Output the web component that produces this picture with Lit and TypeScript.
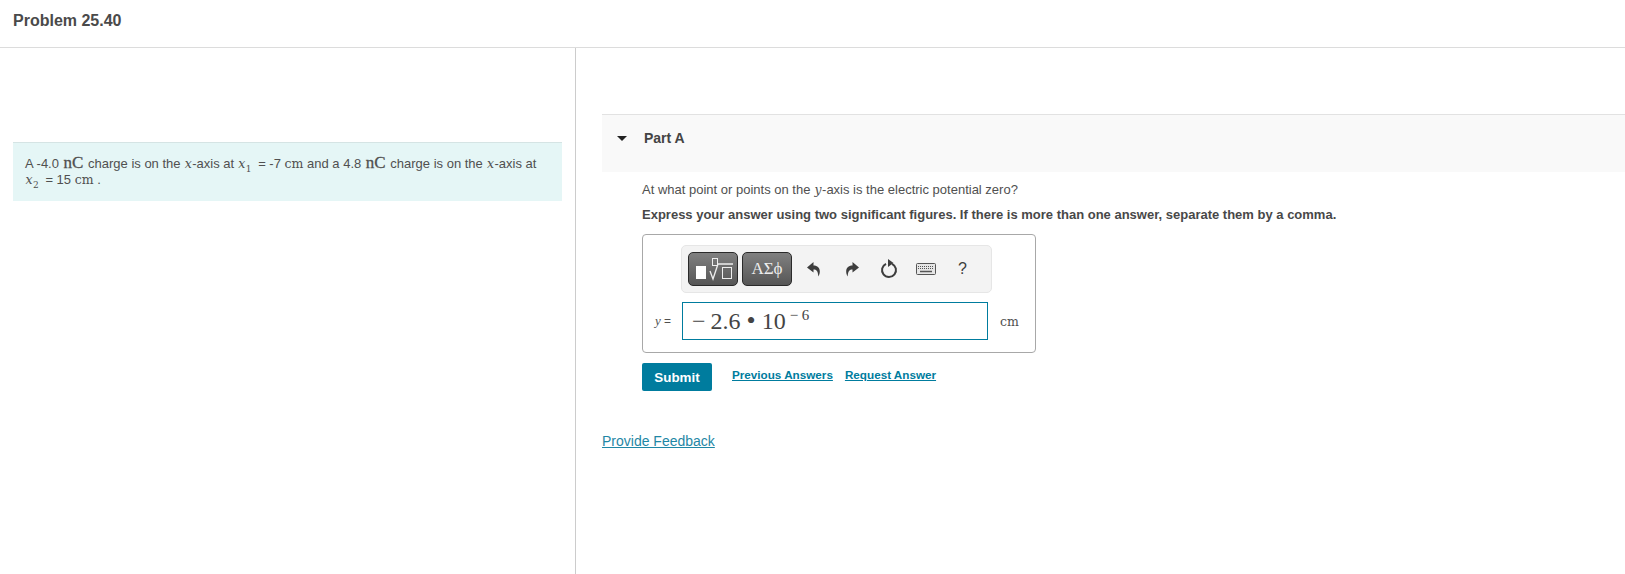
import { LitElement, html, css } from 'lit';
import { customElement } from 'lit/decorators.js';

@customElement('app-root')
export class AppRoot extends LitElement {
  static styles = css`
    :host {
      display: block;
      height: 574px;
      overflow: hidden;
      background: #fff;
      color: #505050;
      font-family: 'Liberation Sans', Arial, sans-serif;
      font-size: 13px;
    }

    .title {
      height: 48px;
      box-sizing: border-box;
      padding: 13px 0 0 13px;
      border-bottom: 1px solid #dcdcdc;
      font-size: 16px;
      line-height: 16px;
      font-weight: bold;
      color: #4a4a4a;
    }

    .columns {
      display: flex;
      height: 526px;
    }

    .left {
      width: 576px;
      box-sizing: border-box;
      flex: none;
      padding: 94px 13px 0 13px;
      border-right: 1px solid #ccc;
    }

    .intro {
      height: 59px;
      box-sizing: border-box;
      padding: 12px 12px 0 12px;
      background: #e5f6f6;
      border-top: 1px solid #d5e4e4;
      line-height: 16px;
    }

    .m {
      font-family: 'DejaVu Serif', serif;
      font-size: 12.5px;
    }
    .m.big {
      margin: 0 1px;
      font-family: 'Liberation Serif', serif;
      font-size: 17px;
      -webkit-text-stroke: 0.3px #505050;
    }
    .m i { padding: 0 0.5px; }
    .m sub { margin-right: 3px; font-size: 9px; line-height: 0; }
    .nb { white-space: nowrap; }

    .right {
      flex: 1;
      min-width: 0;
      padding: 66px 0 0 26px;
    }

    .part-head {
      display: flex;
      align-items: flex-start;
      height: 58px;
      box-sizing: border-box;
      border-top: 1px solid #e2e2e2;
      background: #f9f9f9;
      padding: 15px 0 0 15px;
      font-size: 14px;
      line-height: 16px;
      font-weight: bold;
      color: #444;
    }
    .part-head svg { margin: 6px 17px 0 0; }

    .part-body { padding: 0 0 0 40px; }

    .q { margin: 10px 0 0; line-height: 16px; }
    .hint { margin: 9px 0 0; line-height: 16px; font-weight: bold; color: #484848; }

    .answer {
      width: 394px;
      height: 119px;
      box-sizing: border-box;
      margin-top: 11px;
      padding: 10px 0 0 38px;
      border: 1px solid #a8a8a8;
      border-radius: 4px;
    }

    .toolbar {
      display: flex;
      align-items: center;
      width: 311px;
      height: 48px;
      box-sizing: border-box;
      padding: 0 0 0 6px;
      background: #f3f3f3;
      border: 1px solid #e6e6e6;
      border-radius: 5px;
    }

    .tmpl {
      display: flex;
      align-items: center;
      justify-content: center;
      width: 50px;
      height: 34px;
      box-sizing: border-box;
      background: linear-gradient(#808080, #565656);
      border: 1px solid #2a2a2a;
      border-radius: 5px;
      color: #eee;
    }
    .tmpl.a { width: 50px; margin-right: 4px; }
    .tmpl.b {
      font-family: 'Liberation Serif', serif;
      font-size: 17px;
    }

    .tool {
      display: flex;
      align-items: center;
      justify-content: center;
      width: 37px;
      height: 34px;
      color: #3d3d3d;
    }
    .tool.first { width: 39px; margin-left: 2px; }
    .tool.help { font-size: 16px; }

    .entry {
      display: flex;
      align-items: center;
      margin: 9px 0 0 -26px;
    }
    .entry .lhs {
      width: 27px;
      flex: none;
      font-size: 12px;
      white-space: nowrap;
    }
    .entry .lhs i { font-family: 'Liberation Serif', serif; font-size: 13px; }

    .field {
      display: flex;
      align-items: center;
      width: 306px;
      height: 38px;
      box-sizing: border-box;
      padding: 0 0 0 9px;
      border: 1px solid #007c9e;
      font-family: 'Liberation Serif', serif;
      font-size: 24px;
      color: #444;
      white-space: nowrap;
    }
    .field .dot { margin: 0 6px; font-size: 26px; line-height: 24px; }
    .field .minus { margin-right: 5px; }
    .field sup {
      align-self: flex-start;
      margin: 4px 0 0 4px;
      font-size: 15px;
      line-height: 16px;
    }

    .unit {
      margin-left: 12px;
      font-family: 'DejaVu Serif', serif;
      font-size: 12.5px;
    }

    .actions {
      display: flex;
      align-items: flex-start;
      margin-top: 10px;
    }
    .submit {
      width: 70px;
      height: 28px;
      padding: 0;
      border: 0;
      border-radius: 2px;
      background: #007c9e;
      color: #fff;
      font: bold 13.4px 'Liberation Sans', Arial, sans-serif;
    }
    .actions a {
      margin: 4px 0 0 12px;
      color: #007c9e;
      font-size: 11.7px;
      font-weight: bold;
      line-height: 16px;
      text-decoration: underline;
    }
    .actions a.prev { margin-left: 20px; }

    .feedback {
      display: block;
      margin-top: 42px;
      color: #1f87a5;
      font-size: 14px;
      line-height: 16px;
      text-decoration: underline;
    }
  `;

  render() {
    return html`
      <div class="title">Problem 25.40</div>
      <div class="columns">
        <div class="left">
          <div class="intro">
            A -4.0 <span class="m big">nC</span> charge is on the <span class="m"><i>x</i></span>-axis at
            <span class="m"><i>x</i><sub>1</sub></span> = -7 <span class="m">cm</span> and a 4.8
            <span class="m big">nC</span> charge is on the <span class="m"><i>x</i></span>-axis at
            <span class="nb"><span class="m"><i>x</i><sub>2</sub></span> = 15 <span class="m">cm</span> .</span>
          </div>
        </div>
        <div class="right">
          <div class="part-head">
            <svg width="10" height="5" viewBox="0 0 10 5"><path d="M0 0h10L5 5z" fill="#222"/></svg>
            Part A
          </div>
          <div class="part-body">
            <p class="q">At what point or points on the <span class="m"><i>y</i></span>-axis is the electric potential zero?</p>
            <p class="hint">Express your answer using two significant figures. If there is more than one answer, separate them by a comma.</p>
            <div class="answer">
              <div class="toolbar">
                <div class="tmpl a">
                  <svg width="48" height="32" viewBox="0 0 48 32" fill="none" stroke="#eee">
                    <rect x="7" y="13" width="10" height="13" fill="#fff" stroke="none"/>
                    <rect x="23.500" y="5.500" width="5" height="7"/>
                    <path d="M21 18l3 8 5-15h15" stroke-width="1.300"/>
                    <rect x="33.500" y="14.500" width="9" height="11"/>
                  </svg>
                </div>
                <div class="tmpl b">ΑΣϕ</div>
                <div class="tool first">
                  <svg width="14" height="15" viewBox="0 0 14 15"><path d="M6.500 0L0 5.500 6.500 10.500V7.500c3 0 4.500 1.500 4.800 7C14.500 9 12.500 3.500 6.500 3.500z" fill="#3d3d3d"/></svg>
                </div>
                <div class="tool">
                  <svg width="14" height="15" viewBox="0 0 14 15"><path d="M7.500 0L14 5.500 7.500 10.500V7.500c-3 0-4.500 1.500-4.800 7C-.5 9 1.500 3.500 7.500 3.500z" fill="#3d3d3d"/></svg>
                </div>
                <div class="tool">
                  <svg width="18" height="20" viewBox="0 0 18 20" fill="none"><path d="M6 4.800A7 7 0 1 0 12 4.800" stroke="#3d3d3d" stroke-width="2"/><path d="M8 0l5.500 4L8 8z" fill="#3d3d3d"/></svg>
                </div>
                <div class="tool">
                  <svg width="20" height="12" viewBox="0 0 20 12"><rect x=".5" y=".5" width="19" height="11" rx="1" fill="#e6e6e6" stroke="#555"/><path d="M2 3.500h16M2 5.500h16" stroke="#555" stroke-dasharray="1 1"/><path d="M4 8.500h12" stroke="#555" stroke-width="1.500"/></svg>
                </div>
                <div class="tool help">?</div>
              </div>
              <div class="entry">
                <span class="lhs"><i>y</i> =</span>
                <div class="field">
                  <span class="minus">−</span>2.6<span class="dot">•</span>10<sup>− 6</sup>
                </div>
                <span class="unit">cm</span>
              </div>
            </div>
            <div class="actions">
              <button class="submit">Submit</button>
              <a class="prev" href="#">Previous Answers</a>
              <a href="#">Request Answer</a>
            </div>
          </div>
          <a class="feedback" href="#">Provide Feedback</a>
        </div>
      </div>
    `;
  }
}
